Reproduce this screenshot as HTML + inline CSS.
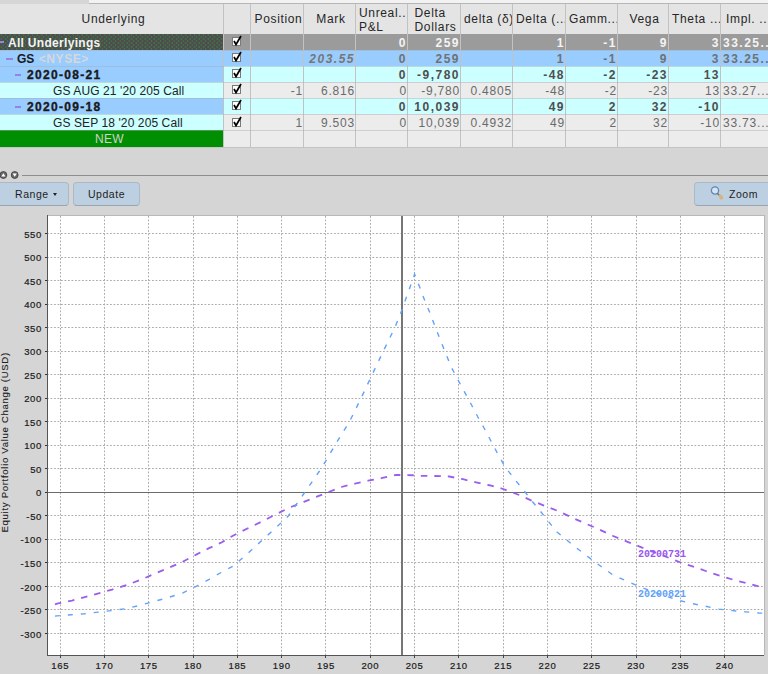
<!DOCTYPE html>
<html><head><meta charset="utf-8">
<style>
html,body{margin:0;padding:0;}
body{width:768px;height:674px;position:relative;overflow:hidden;background:#d5d5d5;font-family:"Liberation Sans",sans-serif;}
.topL{position:absolute;left:0;top:0;width:89px;height:4px;background:#d6d6d6;}
.topR{position:absolute;left:89px;top:0;width:679px;height:3px;background:#f2f2f2;}
.topLine{position:absolute;left:89px;top:3px;width:679px;height:1px;background:#b6b6b6;}
.hdr{position:absolute;left:0;top:4px;width:768px;height:30px;background:#e4e4e4;}
.hc{position:absolute;top:4px;height:30px;line-height:31px;text-align:center;font-size:12px;color:#262626;white-space:nowrap;overflow:hidden;letter-spacing:0.65px;padding-left:4px;box-sizing:border-box;}
.h2{display:inline-block;text-align:left;line-height:14px;vertical-align:top;padding-top:2px;}
.hc2{line-height:14px;text-align:left;padding-left:4px;box-sizing:border-box;padding-top:1px;}
.vs{position:absolute;top:4px;height:143px;width:1px;background:#c2c2c2;}
.hs{position:absolute;left:0;width:768px;height:1px;background:rgba(170,170,170,0.45);}
.bg{position:absolute;height:16px;}
.c{position:absolute;height:16px;line-height:18.5px;text-align:right;font-size:12px;white-space:nowrap;letter-spacing:0.8px;}
.t0{color:#f4f4f4;font-weight:bold;letter-spacing:1.5px;}
.t1{color:#717171;font-weight:bold;letter-spacing:1.5px;}
.t2{color:#4e4e4e;font-weight:bold;letter-spacing:1.5px;}
.t3{color:#6a6a6a;}
.it{font-style:italic;color:#777;}
.tx{position:absolute;height:16px;line-height:18px;font-size:12px;white-space:nowrap;}
.t0l{color:#f4f4f4;font-weight:bold;letter-spacing:0.3px;}
.t1l{color:#1a1a1a;font-weight:bold;}
.t2l{color:#1a1a1a;font-weight:bold;letter-spacing:1.3px;-webkit-text-stroke:0.35px #1a1a1a;}
.t3l{color:#222;letter-spacing:0.1px;}
.mi{position:absolute;width:6px;height:2px;background:#9a80e4;}
.cbs{position:absolute;left:231px;}
.cb{position:absolute;left:232px;width:8px;height:8px;border:1px solid #777;background:#fff;margin-top:0px;}
.cb::after{content:"";position:absolute;left:1px;top:-3px;width:4px;height:8px;border-right:2px solid #000;border-bottom:2px solid #000;transform:rotate(40deg);}
.blk{position:absolute;left:0;top:146px;width:768px;height:34px;background:#d5d5d5;}
.dot{position:absolute;top:171px;width:7px;height:7px;border-radius:50%;background:#6e6e6e;}
.dot::after{content:"";position:absolute;left:1.5px;top:1.5px;width:4px;height:4px;border-radius:50%;background:#e8e8e8;}
.etch{position:absolute;left:22px;top:175px;width:746px;height:1px;background:#8e8e8e;}
.btn{position:absolute;top:182px;height:24px;background:#bdd0e2;border:1px solid #a9b9c9;border-radius:4px;box-sizing:border-box;font-size:10.5px;line-height:22px;color:#1e1e1e;text-align:center;letter-spacing:0.55px;border-bottom-color:#98a6b4;}
.arr{display:inline-block;width:0;height:0;border-left:2.5px solid transparent;border-right:2.5px solid transparent;border-top:3px solid #222;vertical-align:middle;margin-left:4px;margin-top:-1px;}
svg text{font-family:"Liberation Sans",sans-serif;}
.ax text{font-size:9.5px;fill:#1a1a1a;letter-spacing:0.65px;stroke:#1a1a1a;stroke-width:0.2px;}
.lbl{font-family:"Liberation Mono",monospace !important;font-size:10px;}
.yl{font-size:9.5px;fill:#222;letter-spacing:0.72px;stroke:#222;stroke-width:0.1px;}
</style></head><body>
<div class="topL"></div><div class="topR"></div><div class="topLine"></div>
<div class="hdr"></div>
<div class="hc" style="left:722px;width:60px;text-align:left">Impl. ...</div>
<div class="hc" style="left:0px;width:223px">Underlying</div>
<div class="hc" style="left:223px;width:27px"></div>
<div class="hc" style="left:250px;width:53px">Position</div>
<div class="hc" style="left:303px;width:52px">Mark</div>
<div class="hc" style="left:355px;width:52px"><span class="h2">Unreal...<br>P&amp;L</span></div>
<div class="hc" style="left:407px;width:53px"><span class="h2">Delta<br>Dollars</span></div>
<div class="hc" style="left:460px;width:52px">delta (&#948;)</div>
<div class="hc" style="left:512px;width:53px">Delta (...</div>
<div class="hc" style="left:565px;width:52px">Gamm...</div>
<div class="hc" style="left:617px;width:51px">Vega</div>
<div class="hc" style="left:668px;width:52px">Theta ...</div>
<div class="hc" style="left:720px;width:80px"></div>
<div class="bg" style="top:34px;height:16px;left:0;width:223px;background-color:#4d4d4d;background-image:radial-gradient(circle at 1px 1px,#3d7d45 0.6px,transparent 0.8px),radial-gradient(circle at 3.25px 3px,#3d7d45 0.6px,transparent 0.8px);background-size:4.5px 4px"></div>
<div class="bg" style="top:34px;height:16px;left:223px;width:545px;background:#9b9b9b"></div>
<div class="c t0" style="top:34px;left:355px;width:52px">0</div>
<div class="c t0" style="top:34px;left:407px;width:53px">259</div>
<div class="c t0" style="top:34px;left:512px;width:53px">1</div>
<div class="c t0" style="top:34px;left:565px;width:52px">-1</div>
<div class="c t0" style="top:34px;left:617px;width:51px">9</div>
<div class="c t0" style="top:34px;left:668px;width:52px">3</div>
<div class="c t0" style="top:34px;left:723px;width:60px;text-align:left">33.25...</div>
<svg class="cbs" width="14" height="14" style="top:35px"><rect x="1.5" y="2.5" width="8" height="8" fill="#fff" stroke="#7a7a7a" stroke-width="1"/><path d="M3,6 L5,9.5 L10,1" fill="none" stroke="#000" stroke-width="1.7"/></svg>
<div class="bg" style="top:50px;height:16px;left:0;width:223px;background-color:#99ccff"></div>
<div class="bg" style="top:50px;height:16px;left:223px;width:545px;background:#99ccff"></div>
<div class="c t1 it" style="top:50px;left:303px;width:52px">203.55</div>
<div class="c t1" style="top:50px;left:355px;width:52px">0</div>
<div class="c t1" style="top:50px;left:407px;width:53px">259</div>
<div class="c t1" style="top:50px;left:512px;width:53px">1</div>
<div class="c t1" style="top:50px;left:565px;width:52px">-1</div>
<div class="c t1" style="top:50px;left:617px;width:51px">9</div>
<div class="c t1" style="top:50px;left:668px;width:52px">3</div>
<div class="c t1" style="top:50px;left:723px;width:60px;text-align:left">33.25...</div>
<svg class="cbs" width="14" height="14" style="top:51px"><rect x="1.5" y="2.5" width="8" height="8" fill="#fff" stroke="#7a7a7a" stroke-width="1"/><path d="M3,6 L5,9.5 L10,1" fill="none" stroke="#000" stroke-width="1.7"/></svg>
<div class="bg" style="top:66px;height:16px;left:0;width:223px;background-color:#99ccff"></div>
<div class="bg" style="top:66px;height:16px;left:223px;width:545px;background:#ccffff"></div>
<div class="c t2" style="top:66px;left:355px;width:52px">0</div>
<div class="c t2" style="top:66px;left:407px;width:53px">-9,780</div>
<div class="c t2" style="top:66px;left:512px;width:53px">-48</div>
<div class="c t2" style="top:66px;left:565px;width:52px">-2</div>
<div class="c t2" style="top:66px;left:617px;width:51px">-23</div>
<div class="c t2" style="top:66px;left:668px;width:52px">13</div>
<svg class="cbs" width="14" height="14" style="top:67px"><rect x="1.5" y="2.5" width="8" height="8" fill="#fff" stroke="#7a7a7a" stroke-width="1"/><path d="M3,6 L5,9.5 L10,1" fill="none" stroke="#000" stroke-width="1.7"/></svg>
<div class="bg" style="top:82px;height:16px;left:0;width:223px;background-color:#ccffff"></div>
<div class="bg" style="top:82px;height:16px;left:223px;width:545px;background:#ececec"></div>
<div class="c t3" style="top:82px;left:250px;width:53px">-1</div>
<div class="c t3" style="top:82px;left:303px;width:52px">6.816</div>
<div class="c t3" style="top:82px;left:355px;width:52px">0</div>
<div class="c t3" style="top:82px;left:407px;width:53px">-9,780</div>
<div class="c t3" style="top:82px;left:460px;width:52px">0.4805</div>
<div class="c t3" style="top:82px;left:512px;width:53px">-48</div>
<div class="c t3" style="top:82px;left:565px;width:52px">-2</div>
<div class="c t3" style="top:82px;left:617px;width:51px">-23</div>
<div class="c t3" style="top:82px;left:668px;width:52px">13</div>
<div class="c t3" style="top:82px;left:723px;width:60px;text-align:left">33.27...</div>
<svg class="cbs" width="14" height="14" style="top:83px"><rect x="1.5" y="2.5" width="8" height="8" fill="#fff" stroke="#7a7a7a" stroke-width="1"/><path d="M3,6 L5,9.5 L10,1" fill="none" stroke="#000" stroke-width="1.7"/></svg>
<div class="bg" style="top:98px;height:16px;left:0;width:223px;background-color:#99ccff"></div>
<div class="bg" style="top:98px;height:16px;left:223px;width:545px;background:#ccffff"></div>
<div class="c t2" style="top:98px;left:355px;width:52px">0</div>
<div class="c t2" style="top:98px;left:407px;width:53px">10,039</div>
<div class="c t2" style="top:98px;left:512px;width:53px">49</div>
<div class="c t2" style="top:98px;left:565px;width:52px">2</div>
<div class="c t2" style="top:98px;left:617px;width:51px">32</div>
<div class="c t2" style="top:98px;left:668px;width:52px">-10</div>
<svg class="cbs" width="14" height="14" style="top:99px"><rect x="1.5" y="2.5" width="8" height="8" fill="#fff" stroke="#7a7a7a" stroke-width="1"/><path d="M3,6 L5,9.5 L10,1" fill="none" stroke="#000" stroke-width="1.7"/></svg>
<div class="bg" style="top:114px;height:16px;left:0;width:223px;background-color:#ccffff"></div>
<div class="bg" style="top:114px;height:16px;left:223px;width:545px;background:#ececec"></div>
<div class="c t3" style="top:114px;left:250px;width:53px">1</div>
<div class="c t3" style="top:114px;left:303px;width:52px">9.503</div>
<div class="c t3" style="top:114px;left:355px;width:52px">0</div>
<div class="c t3" style="top:114px;left:407px;width:53px">10,039</div>
<div class="c t3" style="top:114px;left:460px;width:52px">0.4932</div>
<div class="c t3" style="top:114px;left:512px;width:53px">49</div>
<div class="c t3" style="top:114px;left:565px;width:52px">2</div>
<div class="c t3" style="top:114px;left:617px;width:51px">32</div>
<div class="c t3" style="top:114px;left:668px;width:52px">-10</div>
<div class="c t3" style="top:114px;left:723px;width:60px;text-align:left">33.73...</div>
<svg class="cbs" width="14" height="14" style="top:116px"><rect x="1.5" y="2.5" width="8" height="8" fill="#fff" stroke="#7a7a7a" stroke-width="1"/><path d="M3,6 L5,9.5 L10,1" fill="none" stroke="#000" stroke-width="1.7"/></svg>
<div class="bg" style="top:130px;height:17px;left:0;width:223px;background-color:#008f00"></div>
<div class="bg" style="top:130px;height:17px;left:223px;width:545px;background:#ececec"></div>

<div class="tx t0l" style="top:34px;left:8px">All Underlyings</div>
<div class="mi" style="top:41px;left:0px;width:4px"></div>
<div class="mi" style="top:58px;left:6px;width:7px"></div>
<div class="tx t1l" style="top:50px;left:17px">GS <span style="color:#d8d8d8;margin-left:1px;letter-spacing:0.6px">&lt;NYSE&gt;</span></div>
<div class="mi" style="top:74px;left:15px"></div>
<div class="tx t2l" style="top:66px;left:27px">2020-08-21</div>
<div class="tx t3l" style="top:82px;left:53px">GS AUG 21 '20 205 Call</div>
<div class="mi" style="top:106px;left:15px"></div>
<div class="tx t2l" style="top:98px;left:27px">2020-09-18</div>
<div class="tx t3l" style="top:114px;left:53px">GS SEP 18 '20 205 Call</div>
<div class="tx" style="top:130px;left:0;width:219px;text-align:center;color:#d0d0d0;letter-spacing:0.3px">NEW</div>

<div class="vs" style="left:223px"></div>
<div class="vs" style="left:250px"></div>
<div class="vs" style="left:303px"></div>
<div class="vs" style="left:355px"></div>
<div class="vs" style="left:407px"></div>
<div class="vs" style="left:460px"></div>
<div class="vs" style="left:512px"></div>
<div class="vs" style="left:565px"></div>
<div class="vs" style="left:617px"></div>
<div class="vs" style="left:668px"></div>
<div class="vs" style="left:720px"></div>
<div class="hs" style="top:50px"></div>
<div class="hs" style="top:66px"></div>
<div class="hs" style="top:82px"></div>
<div class="hs" style="top:98px"></div>
<div class="hs" style="top:114px"></div>
<div class="hs" style="top:130px"></div>
<div class="hs" style="top:147px;background:#c4c4c4"></div>
<svg width="22" height="12" style="position:absolute;left:0;top:169px"><circle cx="3.4" cy="6" r="3.4" fill="#6a6a6a" stroke="#484848" stroke-width="1"/><path d="M1.3,7.6 L5.5,7.6 L3.4,4.3 Z" fill="#fff"/><circle cx="14.7" cy="6" r="3.4" fill="#6a6a6a" stroke="#484848" stroke-width="1"/><path d="M12.6,4.4 L16.8,4.4 L14.7,7.7 Z" fill="#fff"/></svg>
<div class="etch"></div>
<div class="btn" style="left:-4px;width:73px;text-align:left;padding-left:18px">Range<span class="arr"></span></div>
<div class="btn" style="left:73px;width:67px">Update</div>
<div class="btn" style="left:694px;width:80px;text-align:left;padding-left:34px">Zoom</div>
<svg width="16" height="16" style="position:absolute;left:709px;top:185px"><circle cx="6" cy="5.5" r="3.6" fill="#d6e4f2" stroke="#5f86b4" stroke-width="1.3"/><path d="M8.5,8.5 L11,11" stroke="#6a6a6a" stroke-width="1.5"/><path d="M9.5,10 Q11,8.5 13,10.5 L14.5,13 Q13,15 11,14.5 Z" fill="#d9b27c"/></svg>
<svg width="768" height="674" style="position:absolute;left:0;top:0">
<rect x="47" y="215" width="718" height="440" fill="#b8b8b8"/><rect x="47" y="216" width="717" height="440" fill="#fff"/>
<g stroke="#acacac" stroke-width="1" stroke-dasharray="1.8,1.7">
<line x1="60.5" y1="216" x2="60.5" y2="655"/>
<line x1="104.5" y1="216" x2="104.5" y2="655"/>
<line x1="148.5" y1="216" x2="148.5" y2="655"/>
<line x1="193.5" y1="216" x2="193.5" y2="655"/>
<line x1="237.5" y1="216" x2="237.5" y2="655"/>
<line x1="281.5" y1="216" x2="281.5" y2="655"/>
<line x1="325.5" y1="216" x2="325.5" y2="655"/>
<line x1="370.5" y1="216" x2="370.5" y2="655"/>
<line x1="414.5" y1="216" x2="414.5" y2="655"/>
<line x1="458.5" y1="216" x2="458.5" y2="655"/>
<line x1="503.5" y1="216" x2="503.5" y2="655"/>
<line x1="547.5" y1="216" x2="547.5" y2="655"/>
<line x1="591.5" y1="216" x2="591.5" y2="655"/>
<line x1="636.5" y1="216" x2="636.5" y2="655"/>
<line x1="680.5" y1="216" x2="680.5" y2="655"/>
<line x1="724.5" y1="216" x2="724.5" y2="655"/>
<line x1="47" y1="633.5" x2="764" y2="633.5"/>
<line x1="47" y1="609.5" x2="764" y2="609.5"/>
<line x1="47" y1="586.5" x2="764" y2="586.5"/>
<line x1="47" y1="562.5" x2="764" y2="562.5"/>
<line x1="47" y1="539.5" x2="764" y2="539.5"/>
<line x1="47" y1="515.5" x2="764" y2="515.5"/>
<line x1="47" y1="468.5" x2="764" y2="468.5"/>
<line x1="47" y1="445.5" x2="764" y2="445.5"/>
<line x1="47" y1="421.5" x2="764" y2="421.5"/>
<line x1="47" y1="398.5" x2="764" y2="398.5"/>
<line x1="47" y1="374.5" x2="764" y2="374.5"/>
<line x1="47" y1="351.5" x2="764" y2="351.5"/>
<line x1="47" y1="327.5" x2="764" y2="327.5"/>
<line x1="47" y1="304.5" x2="764" y2="304.5"/>
<line x1="47" y1="280.5" x2="764" y2="280.5"/>
<line x1="47" y1="257.5" x2="764" y2="257.5"/>
<line x1="47" y1="233.5" x2="764" y2="233.5"/>
</g>
<line x1="47" y1="492.5" x2="764" y2="492.5" stroke="#6a6a6a" stroke-width="1"/>
<line x1="402" y1="216" x2="402" y2="655" stroke="#767676" stroke-width="2"/>
<path d="M54.88,604.33L58.07,603.39L71.98,600.57L85.72,596.81L99.54,593.04L112.03,589.61L127.00,585.00L141.71,579.41L154.56,573.76L166.52,568.73L182.47,561.91L196.64,554.39L209.05,548.13L221.45,542.49L232.97,535.67L250.69,526.92L263.09,520.99L274.61,514.97L288.34,508.11L303.85,501.90L316.25,496.87L328.66,491.98L341.50,486.99L354.97,483.61L368.08,480.74L381.29,478.24L396.26,474.90L412.47,475.23L421.07,475.75L434.98,475.99L449.15,476.50L462.98,479.23L476.09,482.38L489.20,485.25L501.07,488.26L519.15,494.99L531.55,500.58L543.96,505.57L558.57,511.21L573.19,518.13L586.04,523.77L598.53,529.08L612.62,535.76L626.97,541.59L639.64,546.63L660.02,554.48L680.13,562.24L693.25,566.61L705.74,570.99L719.47,575.60L733.21,579.73L746.41,583.12L759.52,586.60L764.57,587.40" fill="none" stroke="#9a5eec" stroke-width="1.8" stroke-dasharray="6.5,7"/>
<path d="M54.88,616.09L57.01,615.90L71.36,614.77L84.48,613.74L98.30,612.09L111.41,610.59L125.76,608.75L139.94,605.27L152.34,601.89L166.25,598.12L182.47,593.04L197.53,585.61L209.05,579.41L221.10,572.49L232.97,566.24L248.74,552.50L278.16,525.60L288.08,516.24L303.76,493.76L319.35,471.24L326.00,460.61L334.86,445.37L349.39,421.85L361.00,398.34L372.07,374.82L383.24,351.31L394.75,327.79L400.42,313.92L414.60,274.32L419.47,286.60L425.23,301.93L430.02,313.12L434.71,325.58L439.76,338.52L444.72,350.98L451.19,366.92L458.72,381.27L465.01,392.88L471.57,405.02L477.86,417.01L484.51,428.77L490.80,440.76L497.26,452.89L504.71,466.25L514.98,479.75L523.76,490.24L531.55,500.58L540.41,511.21L548.74,521.89L556.98,532.00L567.88,540.98L578.51,549.49L589.50,557.91L600.13,565.77L612.62,574.70L626.97,581.29L639.64,586.65L659.14,593.98L678.89,600.38L691.92,603.48L705.21,606.21L718.94,609.08L732.41,610.59L745.70,611.86L758.90,612.98L764.57,613.27" fill="none" stroke="#62a2f8" stroke-width="1.4" stroke-dasharray="5,8"/>
<text x="638" y="557" class="lbl" fill="#9a55ee" font-weight="bold">20200731</text>
<text x="638" y="597" class="lbl" fill="#62a2f8" font-weight="bold">20200821</text>
<line x1="47.5" y1="215" x2="47.5" y2="655" stroke="#555" stroke-width="1"/>
<line x1="47" y1="655.5" x2="764" y2="655.5" stroke="#555" stroke-width="1"/>
<g class="ax">
<text x="42" y="637.5" text-anchor="end">-300</text>
<line x1="45" y1="633.5" x2="47" y2="633.5" stroke="#333"/>
<text x="42" y="614.0" text-anchor="end">-250</text>
<line x1="45" y1="609.5" x2="47" y2="609.5" stroke="#333"/>
<text x="42" y="590.5" text-anchor="end">-200</text>
<line x1="45" y1="586.5" x2="47" y2="586.5" stroke="#333"/>
<text x="42" y="566.9" text-anchor="end">-150</text>
<line x1="45" y1="562.5" x2="47" y2="562.5" stroke="#333"/>
<text x="42" y="543.4" text-anchor="end">-100</text>
<line x1="45" y1="539.5" x2="47" y2="539.5" stroke="#333"/>
<text x="42" y="519.9" text-anchor="end">-50</text>
<line x1="45" y1="515.5" x2="47" y2="515.5" stroke="#333"/>
<text x="42" y="496.4" text-anchor="end">0</text>
<line x1="45" y1="492.5" x2="47" y2="492.5" stroke="#333"/>
<text x="42" y="472.9" text-anchor="end">50</text>
<line x1="45" y1="468.5" x2="47" y2="468.5" stroke="#333"/>
<text x="42" y="449.4" text-anchor="end">100</text>
<line x1="45" y1="445.5" x2="47" y2="445.5" stroke="#333"/>
<text x="42" y="425.9" text-anchor="end">150</text>
<line x1="45" y1="421.5" x2="47" y2="421.5" stroke="#333"/>
<text x="42" y="402.3" text-anchor="end">200</text>
<line x1="45" y1="398.5" x2="47" y2="398.5" stroke="#333"/>
<text x="42" y="378.8" text-anchor="end">250</text>
<line x1="45" y1="374.5" x2="47" y2="374.5" stroke="#333"/>
<text x="42" y="355.3" text-anchor="end">300</text>
<line x1="45" y1="351.5" x2="47" y2="351.5" stroke="#333"/>
<text x="42" y="331.8" text-anchor="end">350</text>
<line x1="45" y1="327.5" x2="47" y2="327.5" stroke="#333"/>
<text x="42" y="308.3" text-anchor="end">400</text>
<line x1="45" y1="304.5" x2="47" y2="304.5" stroke="#333"/>
<text x="42" y="284.8" text-anchor="end">450</text>
<line x1="45" y1="280.5" x2="47" y2="280.5" stroke="#333"/>
<text x="42" y="261.2" text-anchor="end">500</text>
<line x1="45" y1="257.5" x2="47" y2="257.5" stroke="#333"/>
<text x="42" y="237.7" text-anchor="end">550</text>
<line x1="45" y1="233.5" x2="47" y2="233.5" stroke="#333"/>
<text x="60.2" y="669" text-anchor="middle">165</text>
<line x1="60.5" y1="655" x2="60.5" y2="658" stroke="#444"/>
<text x="104.5" y="669" text-anchor="middle">170</text>
<line x1="104.5" y1="655" x2="104.5" y2="658" stroke="#444"/>
<text x="148.8" y="669" text-anchor="middle">175</text>
<line x1="148.5" y1="655" x2="148.5" y2="658" stroke="#444"/>
<text x="193.1" y="669" text-anchor="middle">180</text>
<line x1="193.5" y1="655" x2="193.5" y2="658" stroke="#444"/>
<text x="237.4" y="669" text-anchor="middle">185</text>
<line x1="237.5" y1="655" x2="237.5" y2="658" stroke="#444"/>
<text x="281.7" y="669" text-anchor="middle">190</text>
<line x1="281.5" y1="655" x2="281.5" y2="658" stroke="#444"/>
<text x="326.0" y="669" text-anchor="middle">195</text>
<line x1="325.5" y1="655" x2="325.5" y2="658" stroke="#444"/>
<text x="370.3" y="669" text-anchor="middle">200</text>
<line x1="370.5" y1="655" x2="370.5" y2="658" stroke="#444"/>
<text x="414.6" y="669" text-anchor="middle">205</text>
<line x1="414.5" y1="655" x2="414.5" y2="658" stroke="#444"/>
<text x="458.9" y="669" text-anchor="middle">210</text>
<line x1="458.5" y1="655" x2="458.5" y2="658" stroke="#444"/>
<text x="503.2" y="669" text-anchor="middle">215</text>
<line x1="503.5" y1="655" x2="503.5" y2="658" stroke="#444"/>
<text x="547.5" y="669" text-anchor="middle">220</text>
<line x1="547.5" y1="655" x2="547.5" y2="658" stroke="#444"/>
<text x="591.8" y="669" text-anchor="middle">225</text>
<line x1="591.5" y1="655" x2="591.5" y2="658" stroke="#444"/>
<text x="636.1" y="669" text-anchor="middle">230</text>
<line x1="636.5" y1="655" x2="636.5" y2="658" stroke="#444"/>
<text x="680.4" y="669" text-anchor="middle">235</text>
<line x1="680.5" y1="655" x2="680.5" y2="658" stroke="#444"/>
<text x="724.7" y="669" text-anchor="middle">240</text>
<line x1="724.5" y1="655" x2="724.5" y2="658" stroke="#444"/>
</g>
<text class="yl" transform="translate(8,442.3) rotate(-90)" text-anchor="middle">Equity Portfolio Value Change (USD)</text>
</svg>
</body></html>
